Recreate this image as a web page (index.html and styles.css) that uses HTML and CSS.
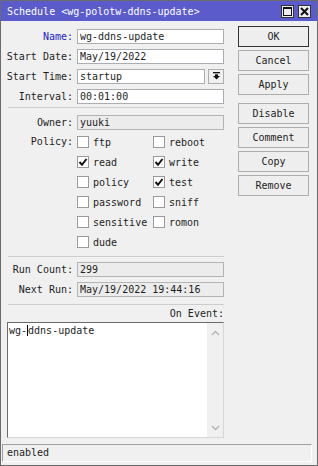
FILE: index.html
```html
<!DOCTYPE html>
<html lang="en">
<head>
    <meta charset="UTF-8">
    <title>Schedule</title>
    <link rel="stylesheet" href="styles.css">
</head>
<body>
<div class="window">
    <div class="titlebar">
        <span class="title">Schedule &lt;wg-polotw-ddns-update&gt;</span>
        <span class="tbtn">
            <svg width="9" height="9" viewBox="0 0 9 9"><rect x="0.5" y="0.5" width="8" height="8" fill="none" stroke="#111"/><rect x="0" y="0" width="9" height="2" fill="#111"/></svg>
        </span>
        <span class="tbtn">
            <svg width="9" height="9" viewBox="0 0 9 9"><path d="M1 1 L8 8 M8 1 L1 8" stroke="#111" stroke-width="2"/></svg>
        </span>
    </div>

    <div class="main">
        <div class="form">
            <div class="row"><span class="lbl blue">Name:</span><div class="field">wg-ddns-update</div></div>
            <div class="row"><span class="lbl">Start Date:</span><div class="field">May/19/2022</div></div>
            <div class="row">
                <span class="lbl">Start Time:</span><div class="field">startup</div>
                <span class="drop"><svg width="7" height="8" viewBox="0 0 7 8"><rect x="0" y="0" width="7" height="1.3" fill="#111"/><rect x="2" y="2.3" width="3" height="2" fill="#111"/><polygon points="0,4 7,4 3.5,7.6" fill="#111"/></svg></span>
            </div>
            <div class="row"><span class="lbl">Interval:</span><div class="field">00:01:00</div></div>

            <div class="sep"></div>

            <div class="row"><span class="lbl">Owner:</span><div class="field off">yuuki</div></div>
            <div class="policy">
                <span class="lbl">Policy:</span>
                <div class="checks">
                    <div class="chk"><span class="box"></span>ftp</div>
                    <div class="chk"><span class="box"></span>reboot</div>
                    <div class="chk"><span class="box on"><svg width="10" height="10" viewBox="0 0 10 10"><path d="M1.5 5 L4 7.8 L8.5 2" fill="none" stroke="#111" stroke-width="2"/></svg></span>read</div>
                    <div class="chk"><span class="box on"><svg width="10" height="10" viewBox="0 0 10 10"><path d="M1.5 5 L4 7.8 L8.5 2" fill="none" stroke="#111" stroke-width="2"/></svg></span>write</div>
                    <div class="chk"><span class="box"></span>policy</div>
                    <div class="chk"><span class="box on"><svg width="10" height="10" viewBox="0 0 10 10"><path d="M1.5 5 L4 7.8 L8.5 2" fill="none" stroke="#111" stroke-width="2"/></svg></span>test</div>
                    <div class="chk"><span class="box"></span>password</div>
                    <div class="chk"><span class="box"></span>sniff</div>
                    <div class="chk"><span class="box"></span>sensitive</div>
                    <div class="chk"><span class="box"></span>romon</div>
                    <div class="chk"><span class="box"></span>dude</div>
                </div>
            </div>

            <div class="sep sep2"></div>

            <div class="row"><span class="lbl">Run Count:</span><div class="field off">299</div></div>
            <div class="row"><span class="lbl">Next Run:</span><div class="field off">May/19/2022 19:44:16</div></div>

            <div class="sep sep3"></div>

            <div class="event-lbl">On Event:</div>
            <div class="editor">
                <div class="editor-text">wg-<span class="caret"></span>ddns-update</div>
                <div class="vscroll">
                    <svg width="9" height="6" viewBox="0 0 9 6"><path d="M1 5 L4.5 1.5 L8 5" fill="none" stroke="#b4b4b4" stroke-width="1.4"/></svg>
                    <svg width="9" height="6" viewBox="0 0 9 6"><path d="M1 1 L4.5 4.5 L8 1" fill="none" stroke="#b4b4b4" stroke-width="1.4"/></svg>
                </div>
            </div>
        </div>

        <div class="buttons">
            <div class="btn default">OK</div>
            <div class="btn">Cancel</div>
            <div class="btn">Apply</div>
            <div class="btn gap">Disable</div>
            <div class="btn">Comment</div>
            <div class="btn">Copy</div>
            <div class="btn">Remove</div>
        </div>
    </div>

    <div class="statusbar">enabled</div>
</div>
</body>
</html>
```

FILE: styles.css
```css
body {
    margin: 0;
    font-family: "DejaVu Sans Mono", "Liberation Mono", monospace;
    font-size: 10px;
    color: #1e1e1e;
}
.window {
    width: 318px;
    height: 466px;
    box-sizing: border-box;
    border: 1px solid #6b6b6b;
    background: #f0f0f0;
    display: flex;
    flex-direction: column;
}
.titlebar {
    height: 20px;
    flex: none;
    background: #5b5bcb;
    color: #fff;
    display: flex;
    align-items: center;
    padding: 0 6px 0 6px;
}
.title {
    flex: 1;
}
.tbtn {
    width: 13px;
    height: 13px;
    box-sizing: border-box;
    border: 1px solid #333;
    background: #ededed;
    margin-left: 4px;
    display: flex;
    align-items: center;
    justify-content: center;
}
.main {
    flex: 1;
    display: flex;
    padding-top: 5px;
}
.form {
    width: 223px;
    flex: none;
}
.row {
    display: flex;
    align-items: center;
    height: 20px;
}
.lbl {
    width: 72px;
    flex: none;
    margin-right: 4px;
    text-align: right;
    white-space: nowrap;
}
.blue {
    color: #2424c4;
}
.field {
    flex: 1;
    height: 15px;
    box-sizing: border-box;
    border: 1px solid #abadb3;
    background: #fff;
    padding: 0 2px;
    line-height: 13px;
    white-space: nowrap;
}
.field.off {
    background: #ececec;
    border-color: #b4b4b4;
}
.drop {
    width: 16px;
    height: 15px;
    box-sizing: border-box;
    margin-left: 3px;
    border: 1px solid #adadad;
    background: #f0f0f0;
    display: flex;
    align-items: center;
    justify-content: center;
}
.sep {
    height: 1px;
    background: #cdcdcd;
    margin: 1px 0 4px 7px;
}
.sep2 {
    margin: 4px 0 2px 7px;
}
.sep3 {
    margin: 5px 0 0 7px;
}
.policy {
    display: flex;
}
.policy .lbl {
    height: 20px;
    line-height: 20px;
}
.checks {
    display: grid;
    grid-template-columns: 76px 71px;
    grid-auto-rows: 20px;
}
.chk {
    display: flex;
    align-items: center;
}
.box {
    width: 12px;
    height: 12px;
    box-sizing: border-box;
    border: 1px solid #9a9a9a;
    background: #fff;
    margin-right: 4px;
    display: flex;
    align-items: center;
    justify-content: center;
}
.event-lbl {
    height: 17px;
    line-height: 17px;
    text-align: right;
}
.editor {
    margin-left: 6px;
    height: 116px;
    box-sizing: border-box;
    border: 1px solid;
    border-color: #6a6a6a #d6d6d6 #d6d6d6 #6a6a6a;
    background: #fff;
    display: flex;
}
.editor-text {
    flex: 1;
    padding: 2px 1px;
    line-height: 12px;
}
.caret {
    display: inline-block;
    width: 0;
    height: 11px;
    border-left: 1px solid #000;
    vertical-align: -2px;
}
.vscroll {
    width: 16px;
    background: #f0f0f0;
    display: flex;
    flex-direction: column;
    justify-content: space-between;
    align-items: center;
    padding: 7px 0 6px;
}
.buttons {
    margin-left: 14px;
    width: 71px;
    display: flex;
    flex-direction: column;
    gap: 3px;
}
.btn {
    height: 21px;
    box-sizing: border-box;
    border: 1px solid #adadad;
    background: #eeeeee;
    text-align: center;
    line-height: 19px;
}
.btn.default {
    border-color: #333;
}
.btn.gap {
    margin-top: 5px;
}
.statusbar {
    flex: none;
    height: 18px;
    box-sizing: border-box;
    margin: 6px 5px 3px 1px;
    border: 1px solid;
    border-color: #a0a0a0 #fff #fff #a0a0a0;
    padding-left: 4px;
    line-height: 16px;
}
```
